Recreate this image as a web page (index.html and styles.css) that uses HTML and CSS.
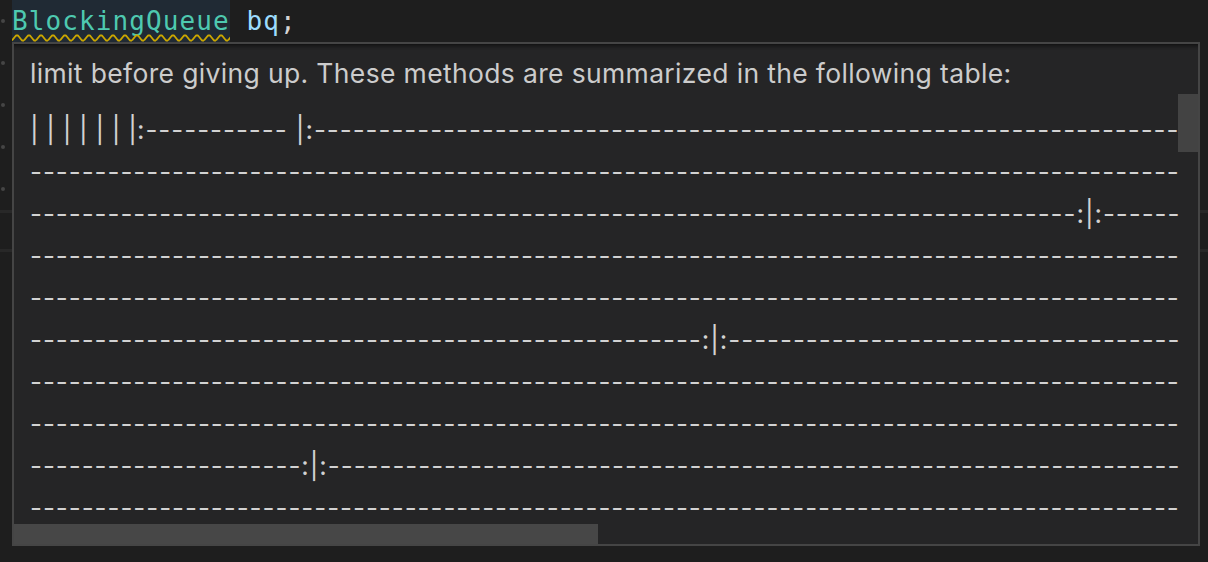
FILE: index.html
```html
<!DOCTYPE html>
<html lang="en">
<head>
<meta charset="utf-8">
<title>Hover</title>
<link rel="stylesheet" href="styles.css">
</head>
<body>
<div class="editor">
  <div class="line">
    <span class="gutter"><i class="dot"></i></span>
    <span class="code"><span class="hl"><span class="type">BlockingQueue</span><svg class="squiggle" width="218" height="8" viewBox="0 0 218 8"><defs><pattern id="sq" width="12" height="8" patternUnits="userSpaceOnUse"><path d="M0 6.5 L4 1.5 L6 1.5 L10 6.5 L12 6.5" fill="none" stroke="#cca700" stroke-width="1.8" stroke-linejoin="round"/></pattern></defs><rect width="218" height="8" fill="url(#sq)"/></svg></span> <span class="var">bq</span><span class="punct">;</span></span>
  </div>
  <div class="line"><span class="gutter"><i class="dot"></i></span></div>
  <div class="line"><span class="gutter"><i class="dot"></i></span></div>
  <div class="line"><span class="gutter"><i class="dot"></i></span></div>
  <div class="line"><span class="gutter"><i class="dot"></i></span></div>
  <div class="line current"></div>

  <div class="hover">
    <div class="hover-body">
      <p class="para">limit before giving up. These methods are summarized in the following table:</p>
      <div class="table-text">
        <div class="tline"><span class="pipes">| | | | | | |</span>:----------- |:-------------------------------------------------------------------</div>
        <div class="tline">-----------------------------------------------------------------------------------------</div>
        <div class="tline">---------------------------------------------------------------------------------:|:------</div>
        <div class="tline">-----------------------------------------------------------------------------------------</div>
        <div class="tline">-----------------------------------------------------------------------------------------</div>
        <div class="tline">----------------------------------------------------:|:-----------------------------------</div>
        <div class="tline">-----------------------------------------------------------------------------------------</div>
        <div class="tline">-----------------------------------------------------------------------------------------</div>
        <div class="tline">---------------------:|:------------------------------------------------------------------</div>
        <div class="tline">-----------------------------------------------------------------------------------------</div>
      </div>
    </div>
    <div class="scroll-shadow"></div>
    <div class="vthumb"></div>
    <div class="hthumb"></div>
  </div>
</div>
</body>
</html>
```

FILE: styles.css
```css
html, body {
  margin: 0;
  padding: 0;
  background: #1e1e1e;
  width: 1208px;
  height: 562px;
  overflow: hidden;
}

.editor {
  position: relative;
  width: 1208px;
  height: 562px;
  font-family: "DejaVu Sans Mono", monospace;
}

.line {
  display: flex;
  align-items: center;
  height: 42px;
  box-sizing: border-box;
}

.line.current {
  border-top: 3px solid #282828;
  border-bottom: 3px solid #282828;
}

.gutter {
  width: 12px;
  flex: none;
  display: flex;
  align-items: center;
}

.dot {
  display: block;
  width: 4px;
  height: 4px;
  border-radius: 50%;
  background: #454545;
  margin-left: 1px;
}

.code {
  font-size: 26px;
  line-height: 42px;
  letter-spacing: 1.1px;
  color: #d4d4d4;
  white-space: pre;
  height: 42px;
}

.hl {
  position: relative;
  display: inline-block;
  height: 42px;
  background: #202a34;
}

.type { color: #4ec9b0; }
.var { color: #9cdcfe; }
.punct { color: #d4d4d4; }

.squiggle {
  position: absolute;
  left: 0;
  top: 34px;
  display: block;
}

.hover {
  position: absolute;
  left: 12px;
  top: 42px;
  width: 1188px;
  height: 504px;
  box-sizing: border-box;
  border: 2px solid #454545;
  background: #252526;
  overflow: hidden;
  font-family: Inter, "Noto Sans", sans-serif;
  color: #cccccc;
}

.hover-body {
  height: 100%;
  box-sizing: border-box;
  padding: 7.5px 20px 0 16px;
  overflow: hidden;
}

.para {
  margin: 0;
  font-size: 26.5px;
  letter-spacing: 0.35px;
  line-height: 42px;
  white-space: nowrap;
}

.table-text {
  margin-top: 15px;
  font-size: 26px;
  line-height: 42px;
  letter-spacing: 0.96px;
  color: #d2d2d2;
}

.tline {
  height: 42px;
  white-space: nowrap;
}

.pipes {
  letter-spacing: 0.2px;
}

.scroll-shadow {
  position: absolute;
  left: 0;
  top: 0;
  right: 0;
  height: 6px;
  box-shadow: inset 0 6px 6px -6px #000;
}

.vthumb {
  position: absolute;
  right: 0;
  top: 50px;
  width: 20px;
  height: 58px;
  background: #434343;
}

.hthumb {
  position: absolute;
  left: 0;
  bottom: 0;
  width: 584px;
  height: 20px;
  background: #474747;
}
```
